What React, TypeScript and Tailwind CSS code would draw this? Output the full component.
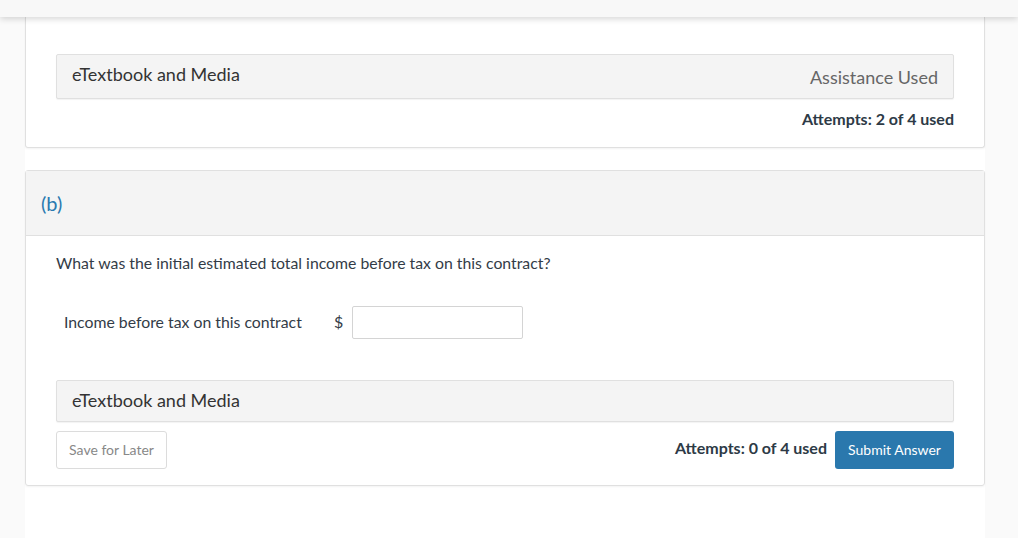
import React from "react";

export default function App() {
  return (
    <div className="min-h-[538px] bg-[#fafafa] text-[#333c47]" style={{ fontFamily: "Lato, 'Open Sans', sans-serif" }}>
      <div className="relative z-10 h-[17px] bg-[#f8f8f8] shadow-[0_2px_6px_rgba(0,0,0,0.16)]" />
      <div className="mx-[25px] w-[960px] bg-white pb-[60px]">
        {/* Card 1 */}
        <div className="rounded-b-[3px] border border-t-0 border-[#e0e0e0] px-[30px] pt-[37px] pb-[16px] shadow-[0_1px_2px_rgba(0,0,0,0.05)]">
          <div className="flex h-[45px] items-center justify-between rounded-[2px] border border-[#e0e0e0] bg-[#f4f4f4] px-[15px] shadow-[0_1px_1px_rgba(0,0,0,0.05)]">
            <span className="pb-[4px] text-[18px] text-[#333]">eTextbook and Media</span>
            <span className="pt-[2px] text-[18px] text-[#666]">Assistance Used</span>
          </div>
          <div className="mt-[8px] text-right text-[16px] font-bold text-[#2d3a46]">Attempts: 2 of 4 used</div>
        </div>
        <div className="h-[22px]" />
        {/* Card 2 */}
        <div className="rounded-[3px] border border-[#e0e0e0] shadow-[0_1px_2px_rgba(0,0,0,0.05)]">
          <div className="flex h-[65px] items-center border-b border-[#e0e0e0] bg-[#f4f4f4] px-[15px]">
            <span className="text-[20px] text-[#2a7ab0]">(b)</span>
          </div>
          <div className="px-[30px] pt-[15px] pb-[16px]">
            <p className="text-[15.8px] text-[#333c47]">What was the initial estimated total income before tax on this contract?</p>
            <div className="mt-[31px] flex items-center pl-[8px]">
              <span className="w-[270px] text-[15.8px] text-[#333c47]">Income before tax on this contract</span>
              <span className="text-[16px] text-[#333c47]">$</span>
              <input className="ml-[9px] h-[33px] w-[171px] rounded-[2px] border border-[#d4d4d4] bg-white outline-none" />
            </div>
            <div className="mt-[41px] flex h-[42px] items-center rounded-[2px] border border-[#e0e0e0] bg-[#f4f4f4] px-[15px] shadow-[0_1px_1px_rgba(0,0,0,0.05)]">
              <span className="text-[18px] text-[#333]">eTextbook and Media</span>
            </div>
            <div className="mt-[9px] flex items-center justify-between">
              <button className="h-[38px] w-[111px] rounded-[3px] border border-[#dcdcdc] bg-white text-[14px] text-[#888]">Save for Later</button>
              <div className="flex items-center gap-[8px]">
                <span className="pb-[4px] text-[16px] font-bold text-[#2d3a46]">Attempts: 0 of 4 used</span>
                <button className="h-[38px] w-[119px] rounded-[3px] bg-[#2a78ad] text-[14px] text-white">Submit Answer</button>
              </div>
            </div>
          </div>
        </div>
      </div>
    </div>
  );
}
